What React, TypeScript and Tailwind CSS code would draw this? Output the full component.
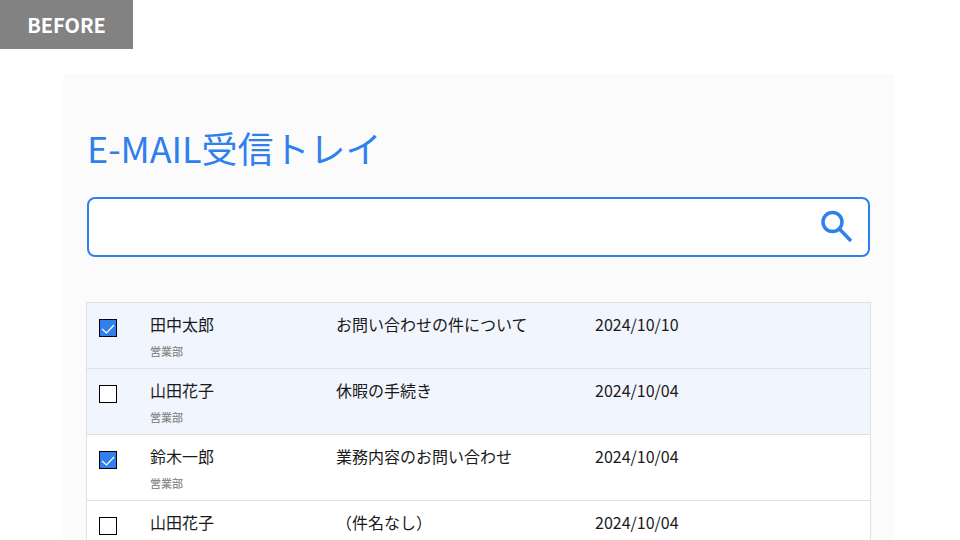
const FONT = "font-['Noto_Sans_CJK_JP','Noto_Sans',sans-serif]";

const rows = [
  { name: '田中太郎', subject: 'お問い合わせの件について', date: '2024/10/10', checked: true, unread: true },
  { name: '山田花子', subject: '休暇の手続き', date: '2024/10/04', checked: false, unread: true },
  { name: '鈴木一郎', subject: '業務内容のお問い合わせ', date: '2024/10/04', checked: true, unread: false },
  { name: '山田花子', subject: '（件名なし）', date: '2024/10/04', checked: false, unread: false },
];

function Checkbox({ checked }: { checked: boolean }) {
  return (
    <div className={`w-[18px] h-[18px] border border-black flex items-center justify-center ${checked ? 'bg-[#2f80ed]' : 'bg-white'}`}>
      {checked && (
        <svg width="14" height="12" viewBox="0 0 14 12" fill="none">
          <path d="M1 7 L5.5 11 L13 3" stroke="white" strokeWidth="1.2" />
        </svg>
      )}
    </div>
  );
}

export default function App() {
  return (
    <div className={`h-[540px] w-[960px] overflow-hidden bg-white ${FONT}`}>
      <div className="w-[133px] h-[49px] bg-[#828282] text-white text-[20px] font-semibold flex items-center justify-center">
        BEFORE
      </div>

      <div className="ml-[63px] mt-[25px] w-[831px] h-[600px] bg-[#fbfbfb] pt-[46px] px-[24px]">
        <h1 className="text-[36px] leading-[54px] text-[#2f80ed] font-normal tracking-[-0.05px]">E-MAIL受信トレイ</h1>

        <div className="mt-[23px] h-[60px] border-2 border-[#2f80ed] rounded-[8px] bg-white flex items-center justify-end pr-[15px]">
          <svg width="34" height="34" viewBox="0 0 34 34" fill="none" stroke="#2f80ed">
            <circle cx="13.5" cy="12" r="9.5" strokeWidth="3.5" />
            <path d="M20.5 19 L32 31" strokeWidth="3.5" />
          </svg>
        </div>

        <div className="mt-[45px] -ml-px w-[785px] border border-[#e0e0e0] border-b-0">
          {rows.map((row, i) => (
            <div
              key={i}
              className={`h-[66px] border-b border-[#e0e0e0] flex items-start text-[16px] text-[#1a1a1a] ${row.unread ? 'bg-[#f1f5fe]' : 'bg-white'}`}
            >
              <div className="w-[63px] pl-[12px] pt-[16px] shrink-0">
                <Checkbox checked={row.checked} />
              </div>
              <div className="w-[186px] shrink-0 pt-[10px]">
                <div className="leading-[22px]">{row.name}</div>
                <div className="mt-[8px] text-[11px] leading-[16px] font-medium text-[#8a8a8a]">営業部</div>
              </div>
              <div className="w-[259px] shrink-0 pt-[10px] leading-[22px]">{row.subject}</div>
              <div className="pt-[10px] leading-[22px]">{row.date}</div>
            </div>
          ))}
        </div>
      </div>
    </div>
  );
}
